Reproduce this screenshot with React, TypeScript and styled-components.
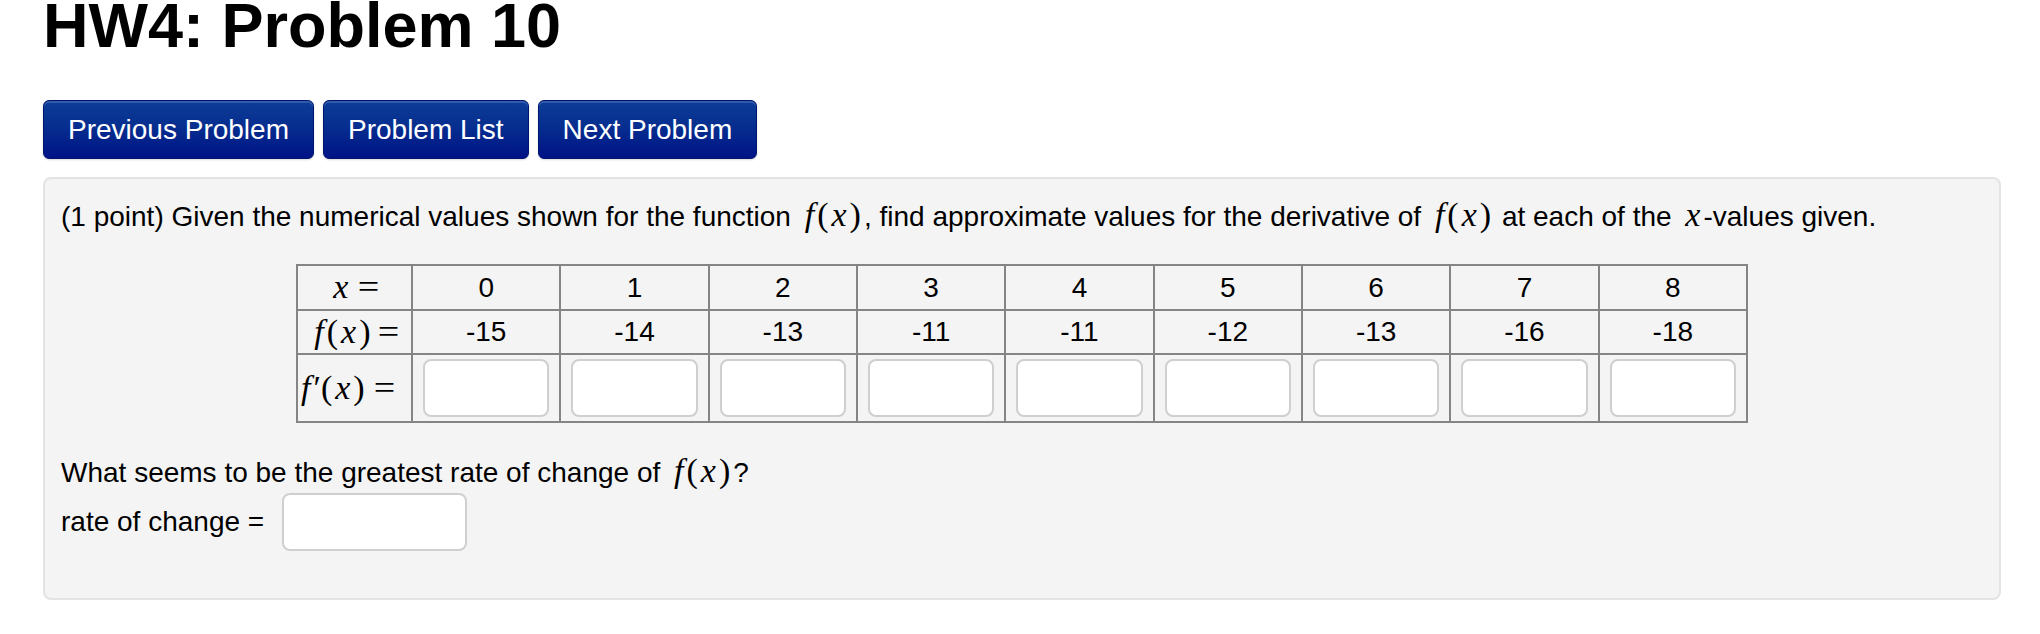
import React from "react";
import styled, { createGlobalStyle } from "styled-components";

const GlobalStyle = createGlobalStyle`
  html, body {
    margin: 0;
    padding: 0;
    background: #ffffff;
  }
  body {
    font-family: "Liberation Sans", Arial, Helvetica, sans-serif;
    color: #000;
  }
`;

const xValues = [0, 1, 2, 3, 4, 5, 6, 7, 8];
const fValues = [-15, -14, -13, -11, -11, -12, -13, -16, -18];

const App = (): JSX.Element => {
  return (
    <>
      <GlobalStyle />
      <Page>
        <Title>HW4: Problem 10</Title>
        <Nav>
          <NavButton>Previous Problem</NavButton>
          <NavButton>Problem List</NavButton>
          <NavButton>Next Problem</NavButton>
        </Nav>
        <ProblemPanel>
          <Paragraph>
            (1 point) Given the numerical values shown for the function <FofX />, find
            approximate values for the derivative of <FofX /> at each of the{" "}
            <MathText $inline>
              <Var $end>x</Var>
            </MathText>
            -values given.
          </Paragraph>
          <ValueTable>
            <colgroup>
              <col style={{ width: 115 }} />
              {xValues.map((v) => (
                <col key={v} />
              ))}
            </colgroup>
            <tbody>
              <tr>
                <LabelCell>
                  <MathText>
                    <Var>x</Var>
                    <Eq>=</Eq>
                  </MathText>
                </LabelCell>
                {xValues.map((v) => (
                  <Cell key={v}>{v}</Cell>
                ))}
              </tr>
              <tr>
                <LabelCell>
                  <MathText>
                    <Var>f</Var>(<Var>x</Var>)<Eq>=</Eq>
                  </MathText>
                </LabelCell>
                {fValues.map((v, i) => (
                  <Cell key={i}>{v}</Cell>
                ))}
              </tr>
              <tr>
                <LabelCell $tight>
                  <MathText>
                    <Var>f</Var>′(<Var>x</Var>)<Eq $tight>=</Eq>
                  </MathText>
                </LabelCell>
                {xValues.map((v) => (
                  <InputCell key={v}>
                    <AnswerInput type="text" />
                  </InputCell>
                ))}
              </tr>
            </tbody>
          </ValueTable>
          <Question>
            What seems to be the greatest rate of change of <FofX />?
          </Question>
          <AnswerRow>
            <span>rate of change =</span>
            <RateInput type="text" />
          </AnswerRow>
        </ProblemPanel>
      </Page>
    </>
  );
};

const FofX = () => (
  <MathText $inline>
    <Var>f</Var>(<Var>x</Var>)
  </MathText>
);

const Page = styled.div`
  padding: 0 39px 0 43px;
`;

const Title = styled.h1`
  margin: 0 0 50px 0;
  font-size: 63px;
  line-height: 50px;
  font-weight: 700;
`;

const Nav = styled.div`
  display: flex;
  gap: 9px;
  margin-bottom: 18px;
`;

const NavButton = styled.button`
  height: 59px;
  padding: 0 24px;
  border: 1px solid #001470;
  border-radius: 6px;
  background: linear-gradient(#0d3c97 0%, #062e8f 45%, #001286 100%);
  box-shadow: inset 0 2px 0 rgba(120, 150, 210, 0.35), 0 1px 2px rgba(0, 0, 0, 0.15);
  color: #ffffff;
  font-family: "Liberation Sans", Arial, Helvetica, sans-serif;
  font-size: 28px;
  cursor: pointer;
`;

const ProblemPanel = styled.div`
  background: #f4f4f4;
  border: 2px solid #e3e3e3;
  border-radius: 8px;
  padding: 18px 16px 47px 16px;
  font-size: 28px;
`;

const Paragraph = styled.p`
  margin: 0 0 27px 0;
  line-height: 40px;
`;

const MathText = styled.span<{ $inline?: boolean }>`
  font-family: "Liberation Serif", "Times New Roman", serif;
  font-size: 34px;
  line-height: 1;
  white-space: nowrap;
  margin: ${(p) => (p.$inline ? "0 3px" : "0")};
`;

const Var = styled.i<{ $end?: boolean }>`
  font-family: "Liberation Serif", "Times New Roman", serif;
  font-style: italic;
  padding: ${(p) => (p.$end ? "0 0 0 3px" : "0 3px")};
`;

const Eq = styled.span<{ $tight?: boolean }>`
  display: inline-block;
  margin-left: ${(p) => (p.$tight ? "10px" : "8px")};
  transform: scaleX(1.12);
`;

const ValueTable = styled.table`
  width: 1452px;
  margin: 0 auto 30px auto;
  border-collapse: collapse;
  table-layout: fixed;
  font-size: 28px;

  td {
    border: 2px solid #858585;
    text-align: center;
  }

  tr:nth-child(1) td {
    height: 43px;
  }
  tr:nth-child(2) td {
    height: 42px;
  }
`;

const LabelCell = styled.td<{ $tight?: boolean }>`
  padding: 0;
  white-space: nowrap;
  overflow: visible;
  text-align: ${(p) => (p.$tight ? "left" : "center")} !important;
`;

const Cell = styled.td`
  padding: 0;
`;

const InputCell = styled.td`
  padding: 4px 10px 4px 10px;
`;

const AnswerInput = styled.input`
  display: block;
  box-sizing: border-box;
  width: 100%;
  height: 58px;
  margin: 0;
  border: 2px solid #cfcfcf;
  border-radius: 8px;
  background: #ffffff;
  font-size: 26px;
`;

const Question = styled.p`
  margin: 0;
  line-height: 40px;
`;

const AnswerRow = styled.div`
  display: flex;
  align-items: center;
  gap: 18px;
`;

const RateInput = styled(AnswerInput)`
  width: 185px;
`;

export default App;
